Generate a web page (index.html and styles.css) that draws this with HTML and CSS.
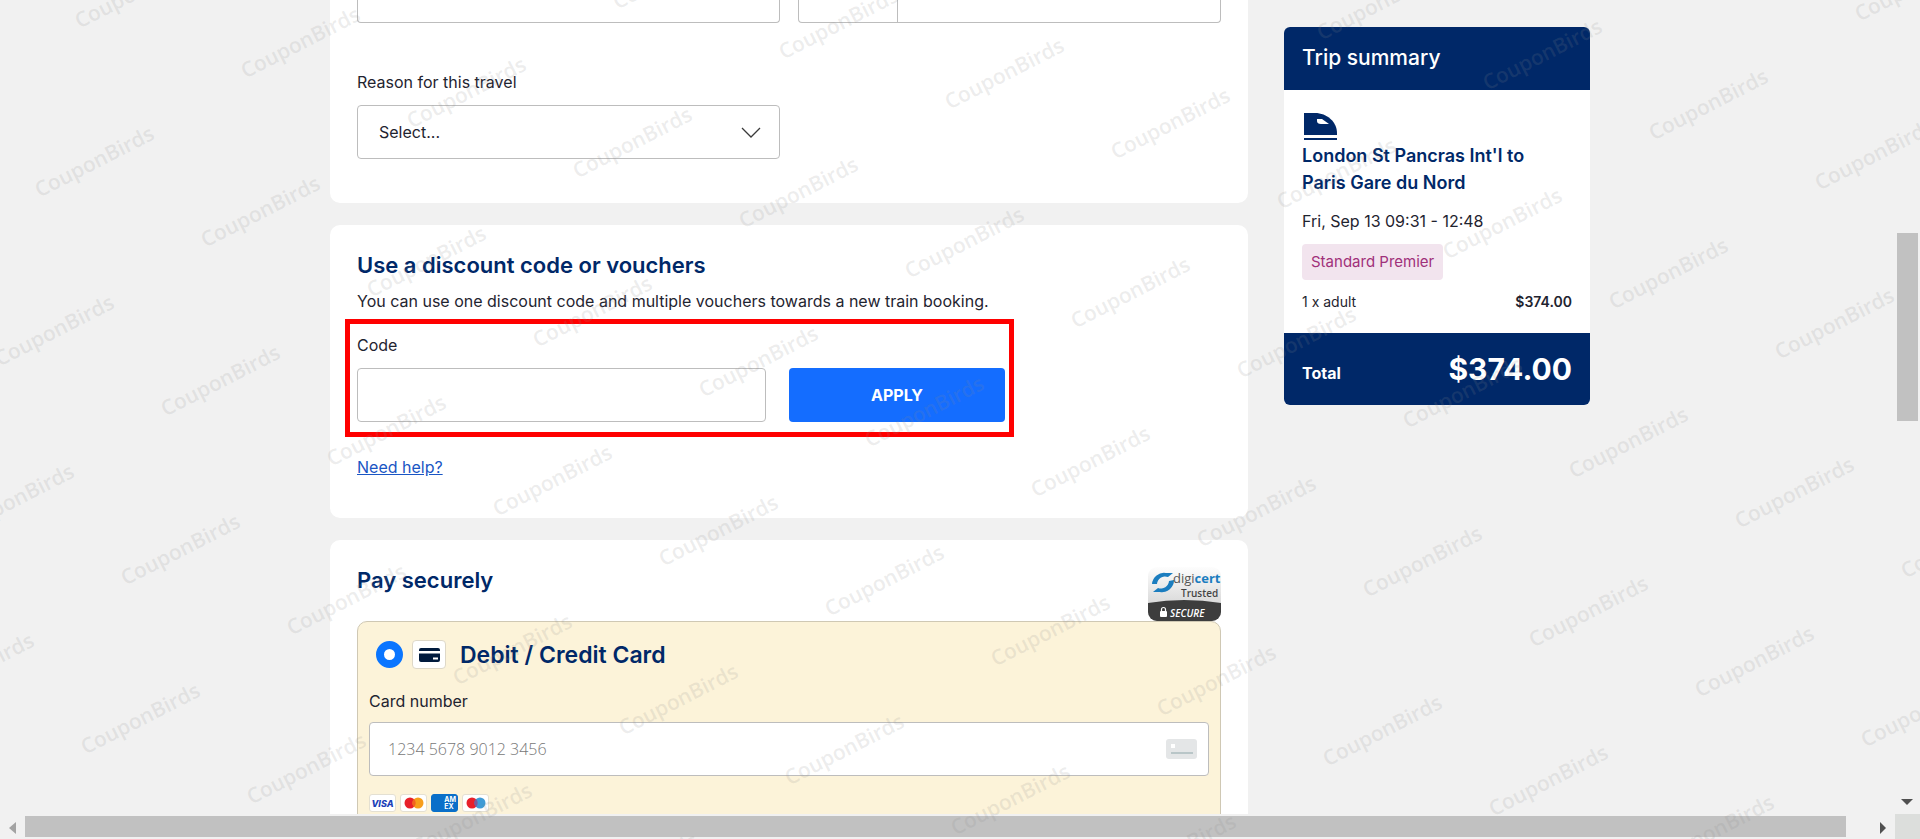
FILE: index.html
```html
<!DOCTYPE html>
<html lang="en">
<head>
    <meta charset="UTF-8">
    <meta name="viewport" content="width=device-width, initial-scale=1.0">
    <title>Checkout - Trip summary</title>
    <link rel="stylesheet" href="styles.css">
</head>
<body>
    <div class="window">
        <div class="viewport">
            <div class="layout">
                <main class="main-column">
                    <section class="card card-details">
                        <div class="cut-row">
                            <div class="cut-input"></div>
                            <div class="cut-input cut-phone"><div class="cut-code"></div></div>
                        </div>
                        <label class="field-label">Reason for this travel</label>
                        <div class="select">
                            <span>Select...</span>
                            <svg width="20" height="11" viewBox="0 0 20 11"><path d="M1 1l9 9 9-9" fill="none" stroke="#3a3a3a" stroke-width="1.3"/></svg>
                        </div>
                    </section>

                    <section class="card card-discount">
                        <h2 class="card-title">Use a discount code or vouchers</h2>
                        <p class="card-text">You can use one discount code and multiple vouchers towards a new train booking.</p>
                        <div class="code-block">
                            <label class="field-label">Code</label>
                            <div class="code-row">
                                <div class="text-input code-input"></div>
                                <button class="apply-button">APPLY</button>
                            </div>
                            <div class="red-box"></div>
                        </div>
                        <a href="#" class="help-link">Need help?</a>
                    </section>

                    <section class="card card-pay">
                        <div class="pay-head">
                            <h2 class="card-title">Pay securely</h2>
                            <svg class="digicert" width="73" height="54" viewBox="0 0 73 54">
                                <defs>
                                    <linearGradient id="certTop" x1="0" y1="0" x2="0" y2="1">
                                        <stop offset="0" stop-color="#fdfdfd"/>
                                        <stop offset="1" stop-color="#c9c9c9"/>
                                    </linearGradient>
                                </defs>
                                <rect width="73" height="54" rx="9" fill="url(#certTop)"/>
                                <path d="M0 36q36-6 73 0v9a9 9 0 0 1-9 9H9a9 9 0 0 1-9-9z" fill="#3d3d3d"/>
                                <path d="M4 17a12 12 0 0 1 14-11l7 0-5 4a8 8 0 0 0-11 7z" fill="#1b7dbf"/>
                                <path d="M26 13a12 12 0 0 1-14 12l-7 0 5-4a8 8 0 0 0 11-7z" fill="#1b7dbf"/>
                                <text x="25" y="16" class="cert-digi">digi<tspan fill="#1b7dbf" font-weight="700">cert</tspan></text>
                                <text x="33" y="30" class="cert-trusted">Trusted</text>
                                <rect x="12" y="44" width="7" height="6" rx="1" fill="#fff"/>
                                <path d="M13.5 44v-1.500a2 2 0 0 1 4 0V44" fill="none" stroke="#fff" stroke-width="1.200"/>
                                <text x="22" y="50" class="cert-secure">SECURE</text>
                            </svg>
                        </div>
                        <div class="pay-box">
                            <div class="pay-option">
                                <span class="radio"></span>
                                <span class="card-icon">
                                    <svg width="21" height="14" viewBox="0 0 21 14"><rect width="21" height="14" rx="2" fill="#001a3d"/><rect y="3" width="21" height="2.500" fill="#fff"/><rect x="14" y="9.500" width="5" height="2" fill="#fff"/></svg>
                                </span>
                                <span class="pay-option-name">Debit / Credit Card</span>
                            </div>
                            <label class="field-label card-number-label">Card number</label>
                            <div class="text-input card-input">
                                <span class="placeholder">1234 5678 9012 3456</span>
                                <svg width="31" height="20" viewBox="0 0 31 20"><rect width="31" height="20" rx="3" fill="#e4e6e7"/><rect x="5" y="5" width="4" height="4" fill="#fff"/><rect x="5" y="13" width="22" height="2" fill="#b9c6c8"/></svg>
                            </div>
                            <div class="logos">
                                <span class="logo logo-visa">VISA</span>
                                <span class="logo">
                                    <svg width="20" height="12" viewBox="0 0 20 12"><circle cx="6" cy="6" r="5.500" fill="#e8202a"/><circle cx="14" cy="6" r="5.500" fill="#f79e1b"/><path d="M10 2a5.500 5.500 0 0 1 0 8 5.500 5.500 0 0 1 0-8z" fill="#f2641f"/></svg>
                                </span>
                                <span class="logo logo-amex">AM<br>EX</span>
                                <span class="logo">
                                    <svg width="20" height="12" viewBox="0 0 20 12"><circle cx="6" cy="6" r="5.500" fill="#e8202a"/><circle cx="14" cy="6" r="5.500" fill="#3f9bd6"/><path d="M10 2a5.500 5.500 0 0 1 0 8 5.500 5.500 0 0 1 0-8z" fill="#7a5a9c"/></svg>
                                </span>
                            </div>
                        </div>
                    </section>
                </main>

                <aside class="summary">
                    <div class="summary-head">Trip summary</div>
                    <div class="summary-body">
                        <svg class="train-icon" width="33" height="27" viewBox="0 0 33 27">
                            <path d="M0 0h11c12 0 22 9 22 20v2H0z" fill="#002868"/>
                            <path d="M13 6h5l7 5h-8q-4 0-4-3z" fill="#fff"/>
                            <rect y="25" width="33" height="2" fill="#002868"/>
                        </svg>
                        <h3 class="route">London St Pancras Int'l to Paris Gare du Nord</h3>
                        <div class="route-time">Fri, Sep 13 09:31 - 12:48</div>
                        <div class="fare-badge">Standard Premier</div>
                        <div class="price-row">
                            <span>1 x adult</span>
                            <span class="price-value">$374.00</span>
                        </div>
                    </div>
                    <div class="summary-total">
                        <span class="total-label">Total</span>
                        <span class="total-value">$374.00</span>
                    </div>
                </aside>
            </div>
            <div class="scroll-v">
                <span class="arrow-up"></span>
                <div class="scroll-v-thumb"></div>
                <span class="arrow-down"></span>
            </div>
        </div>
        <div class="scroll-h">
            <span class="arrow-left"></span>
            <div class="scroll-h-thumb"></div>
            <span class="arrow-right"></span>
            <div class="scroll-corner"></div>
        </div>
    </div>
    <div class="watermarks" id="watermarks"></div>
    <script src="script.js"></script>
</body>
</html>
```

FILE: styles.css
```css
* {
    box-sizing: border-box;
}

body {
    font-family: 'Inter', 'Liberation Sans', sans-serif;
    background-color: #f1f1f1;
    color: #1f2430;
    margin: 0;
    font-size: 16px;
    overflow: hidden;
}

.window {
    display: flex;
    flex-direction: column;
    width: 1920px;
    height: 839px;
}

.viewport {
    display: flex;
    flex: 1;
    min-height: 0;
}

.layout {
    display: flex;
    flex: 1;
    gap: 36px;
    padding-left: 330px;
    overflow: hidden;
}

.main-column {
    width: 918px;
    flex-shrink: 0;
    display: flex;
    flex-direction: column;
    gap: 22px;
}

.card {
    background-color: #fff;
    border-radius: 10px;
    padding: 0 27px;
    flex-shrink: 0;
}

.card-details {
    height: 203px;
    border-radius: 0 0 10px 10px;
}

.cut-row {
    display: flex;
    gap: 18px;
    margin-bottom: 48px;
}

.cut-input {
    flex: 1;
    height: 23px;
    border: 1px solid #bdbdbd;
    border-top: none;
    border-radius: 0 0 4px 4px;
}

.cut-phone {
    flex: none;
    width: 423px;
}

.cut-code {
    width: 99px;
    height: 22px;
    border-right: 1px solid #bdbdbd;
}

.field-label {
    display: block;
    line-height: 22px;
    color: #1f2430;
}

.select {
    display: flex;
    justify-content: space-between;
    align-items: center;
    width: 423px;
    height: 54px;
    margin-top: 12px;
    padding: 0 18px 0 21px;
    border: 1px solid #bdbdbd;
    border-radius: 4px;
}

.card-discount {
    height: 293px;
    padding-top: 27px;
}

.card-title {
    margin: 0;
    font-size: 22px;
    line-height: 26px;
    font-weight: 600;
    color: #002868;
}

.card-text {
    margin: 11px 0 0;
    line-height: 24px;
}

.code-block {
    position: relative;
    width: 648px;
    margin-top: 21px;
}

.code-row {
    display: flex;
    gap: 23px;
    margin-top: 12px;
}

.text-input {
    height: 54px;
    border: 1px solid #bdbdbd;
    border-radius: 4px;
    background-color: #fff;
}

.code-input {
    width: 409px;
}

.apply-button {
    width: 216px;
    height: 54px;
    border: none;
    border-radius: 4px;
    background-color: #146dff;
    color: #fff;
    font-family: inherit;
    font-size: 16px;
    font-weight: 700;
}

.red-box {
    position: absolute;
    left: -12px;
    top: -15px;
    width: 669px;
    height: 118px;
    border: 5px solid #ff0000;
}

.help-link {
    display: block;
    margin-top: 34px;
    line-height: 22px;
    color: #1a56c4;
}

.card-pay {
    flex: 1;
    padding-top: 27px;
    border-radius: 10px 10px 0 0;
}

.pay-head {
    display: flex;
    justify-content: space-between;
    align-items: flex-start;
    height: 54px;
}

.pay-box {
    height: 300px;
    padding: 0 11px;
    background-color: #fcf3d9;
    border: 1px solid #cfc8b4;
    border-radius: 10px 10px 0 0;
}

.pay-option {
    display: flex;
    align-items: center;
    gap: 9px;
    padding: 18px 0 0 7px;
}

.radio {
    width: 27px;
    height: 27px;
    border: 8px solid #0a75ff;
    border-radius: 50%;
    background-color: #fff;
}

.card-icon {
    display: flex;
    align-items: center;
    justify-content: center;
    width: 34px;
    height: 29px;
    background-color: #fff;
    border: 1px solid #ded8c8;
    border-radius: 4px;
}

.pay-option-name {
    margin-left: 5px;
    font-size: 23px;
    font-weight: 600;
    color: #002868;
}

.card-number-label {
    margin-top: 21px;
}

.card-input {
    display: flex;
    justify-content: space-between;
    align-items: center;
    margin-top: 10px;
    padding: 0 11px 0 18px;
}

.placeholder {
    font-family: 'Open Sans', sans-serif;
    font-weight: 300;
    font-size: 16px;
    color: #777;
}

.logos {
    display: flex;
    gap: 4px;
    margin-top: 18px;
}

.logo {
    display: flex;
    align-items: center;
    justify-content: center;
    width: 27px;
    height: 18px;
    background-color: #fff;
    border: 1px solid #e4e0d2;
    border-radius: 3px;
}

.logo-visa {
    font-size: 9px;
    font-weight: 800;
    font-style: italic;
    color: #1a3fb8;
}

.logo-amex {
    justify-content: flex-end;
    padding-right: 1px;
    background-color: #0a6fc9;
    border-color: #0a6fc9;
    color: #fff;
    font-size: 7px;
    line-height: 7px;
    font-weight: 700;
}

.summary {
    width: 306px;
    flex-shrink: 0;
    align-self: flex-start;
    margin-top: 27px;
    background-color: #fff;
    border-radius: 6px;
    overflow: hidden;
}

.summary-head {
    height: 63px;
    padding-left: 18px;
    background-color: #002868;
    color: #fff;
    font-size: 21px;
    font-weight: 500;
    line-height: 62px;
}

.summary-body {
    height: 243px;
    padding: 23px 18px 0;
}

.train-icon {
    display: block;
    margin-left: 2px;
}

.route {
    margin: 2px 0 0;
    font-size: 18px;
    line-height: 27px;
    font-weight: 600;
    color: #002868;
}

.route-time {
    margin-top: 13px;
    line-height: 24px;
}

.fare-badge {
    display: inline-block;
    height: 36px;
    margin-top: 11px;
    padding: 0 9px;
    background-color: #f2e4ee;
    border-radius: 4px;
    color: #a0307a;
    font-size: 15px;
    line-height: 35px;
}

.price-row {
    display: flex;
    justify-content: space-between;
    margin-top: 11px;
    font-size: 14px;
    line-height: 22px;
}

.price-value {
    font-weight: 600;
}

.summary-total {
    display: flex;
    justify-content: space-between;
    align-items: center;
    height: 72px;
    padding: 0 18px;
    background-color: #002868;
    color: #fff;
}

.total-label {
    margin-top: 8px;
    font-size: 16px;
    font-weight: 700;
}

.total-value {
    font-size: 30px;
    font-weight: 700;
}

.scroll-v {
    display: flex;
    flex-direction: column;
    flex-shrink: 0;
    width: 25px;
    padding-left: 2px;
    position: relative;
}

.scroll-v-thumb {
    width: 21px;
    height: 188px;
    margin-top: 233px;
    background-color: #c1c1c1;
}

.arrow-down {
    margin: auto 0 9px 4px;
    width: 0;
    height: 0;
    border-left: 6px solid transparent;
    border-right: 6px solid transparent;
    border-top: 6px solid #505050;
}

.scroll-h {
    display: flex;
    align-items: flex-end;
    flex-shrink: 0;
    height: 25px;
}

.arrow-left {
    width: 0;
    height: 0;
    margin: 0 9px 5px 9px;
    border-top: 6px solid transparent;
    border-bottom: 6px solid transparent;
    border-right: 7px solid #a3a3a3;
}

.scroll-h-thumb {
    width: 1821px;
    height: 21px;
    margin-bottom: 2px;
    background-color: #c1c1c1;
}

.arrow-right {
    width: 0;
    height: 0;
    margin: 0 9px 5px 34px;
    border-top: 6px solid transparent;
    border-bottom: 6px solid transparent;
    border-left: 6px solid #505050;
}

.scroll-corner {
    width: 25px;
    height: 25px;
    background-color: #dcdedc;
}

.watermarks {
    position: absolute;
    left: 0;
    top: 0;
    width: 1920px;
    height: 839px;
    overflow: hidden;
    pointer-events: none;
}

.watermark {
    position: absolute;
    transform: translate(-50%, -50%) rotate(-27deg);
    font-family: 'Open Sans', sans-serif;
    font-size: 21px;
    font-weight: 600;
    color: rgba(140, 140, 140, 0.17);
    white-space: nowrap;
}

.cert-digi {
    font-family: 'Open Sans', sans-serif;
    font-size: 13px;
    fill: #555;
}

.cert-trusted {
    font-family: 'Open Sans', sans-serif;
    font-size: 10px;
    font-weight: 600;
    fill: #444;
}

.cert-secure {
    font-family: 'Open Sans', sans-serif;
    font-size: 10px;
    font-weight: 600;
    font-style: italic;
    fill: #fff;
}
```

FILE: script.js
```js
// Lay the repeated watermark over the whole window
const box = document.getElementById('watermarks');
for (let i = -15; i < 20; i++) {
    for (let j = -15; j < 15; j++) {
        const x = 94 + i * 166 + j * 40;
        const y = 161 + i * 50 - j * 169;
        if (x < -100 || x > 2020 || y < -60 || y > 900) continue;
        const mark = document.createElement('span');
        mark.className = 'watermark';
        mark.textContent = 'CouponBirds';
        mark.style.left = x + 'px';
        mark.style.top = y + 'px';
        box.appendChild(mark);
    }
}
```
